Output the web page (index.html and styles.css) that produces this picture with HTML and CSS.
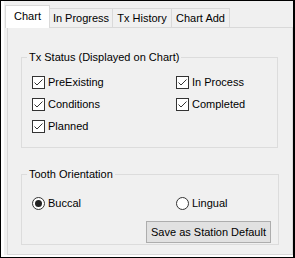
FILE: index.html
```html
<!DOCTYPE html>
<html lang="en">
<head>
  <meta charset="UTF-8">
  <title>Chart Options</title>
  <link rel="stylesheet" href="styles.css">
</head>
<body>
  <div class="frame">
    <div class="inner">
      <div class="tabstrip">
        <div class="tab active tab-chart">Chart</div>
        <div class="tab tab-progress">In Progress</div>
        <div class="tab tab-history">Tx History</div>
        <div class="tab tab-add">Chart Add</div>
      </div>

      <div class="page">
        <fieldset class="group">
          <legend>Tx Status (Displayed on Chart)</legend>
          <div class="options status">
            <label class="opt"><svg class="box" width="13" height="13" viewBox="0 0 13 13"><rect x="0.5" y="0.5" width="12" height="12" fill="#fff" stroke="#333"/><polyline points="2.5,6.5 5,9 10.5,3.5" fill="none" stroke="#333"/></svg>PreExisting</label>
            <label class="opt"><svg class="box" width="13" height="13" viewBox="0 0 13 13"><rect x="0.5" y="0.5" width="12" height="12" fill="#fff" stroke="#333"/><polyline points="2.5,6.5 5,9 10.5,3.5" fill="none" stroke="#333"/></svg>In Process</label>
            <label class="opt"><svg class="box" width="13" height="13" viewBox="0 0 13 13"><rect x="0.5" y="0.5" width="12" height="12" fill="#fff" stroke="#333"/><polyline points="2.5,6.5 5,9 10.5,3.5" fill="none" stroke="#333"/></svg>Conditions</label>
            <label class="opt"><svg class="box" width="13" height="13" viewBox="0 0 13 13"><rect x="0.5" y="0.5" width="12" height="12" fill="#fff" stroke="#333"/><polyline points="2.5,6.5 5,9 10.5,3.5" fill="none" stroke="#333"/></svg>Completed</label>
            <label class="opt"><svg class="box" width="13" height="13" viewBox="0 0 13 13"><rect x="0.5" y="0.5" width="12" height="12" fill="#fff" stroke="#333"/><polyline points="2.5,6.5 5,9 10.5,3.5" fill="none" stroke="#333"/></svg>Planned</label>
          </div>
        </fieldset>

        <fieldset class="group orient">
          <legend>Tooth Orientation</legend>
          <div class="options radios">
            <label class="opt"><svg class="box" width="13" height="13" viewBox="0 0 13 13"><circle cx="6.5" cy="6.5" r="6" fill="#fff" stroke="#333"/><circle cx="6.5" cy="6.5" r="3.5" fill="#222"/></svg>Buccal</label>
            <label class="opt"><svg class="box" width="13" height="13" viewBox="0 0 13 13"><circle cx="6.5" cy="6.5" r="6" fill="#fff" stroke="#333"/></svg>Lingual</label>
            <button class="btn">Save as Station Default</button>
          </div>
        </fieldset>
      </div>
    </div>
  </div>
</body>
</html>
```

FILE: styles.css
```css
body {
  margin: 0;
  background: #fff;
  font-family: 'Liberation Sans', Arial, sans-serif;
  font-size: 11px;
  color: #000;
}
.frame {
  width: 295px;
  height: 258px;
  box-sizing: border-box;
  border: 1px solid #000;
  border-right-width: 2px;
}
.inner {
  height: 100%;
  box-sizing: border-box;
  background: #f0f0f0;
  border-left: 3px solid #fff;
  border-bottom: 2px solid #fff;
  padding-top: 4px;
}
.tabstrip {
  display: flex;
  align-items: flex-end;
  height: 22px;
  padding-left: 1px;
}
.tab {
  box-sizing: border-box;
  height: 19px;
  padding-top: 3px;
  line-height: 13px;
  text-align: center;
  border: 1px solid #d9d9d9;
  border-bottom: 0;
  margin-left: -1px;
  background: #f0f0f0;
}
.tab.active {
  position: relative;
  z-index: 1;
  height: 23px;
  padding-top: 4px;
  margin-left: 0;
  margin-bottom: -1px;
  background: #fff;
}
.tab-chart { width: 45px; }
.tab-progress { width: 64px; }
.tab-history { width: 60px; }
.tab-add { width: 59px; }
.page {
  margin-left: 3px;
  height: 228px;
  box-sizing: border-box;
  border: 1px solid #d9d9d9;
}
.group {
  box-sizing: border-box;
  width: 257px;
  margin: 23px 0 0 13px;
  padding: 0;
  min-width: 0;
  border: 1px solid #dcdcdc;
}
.group legend {
  margin-left: 5px;
  padding: 0 2px;
  line-height: 13px;
}
.group.orient {
  width: 258px;
  margin-top: 20px;
}
.options {
  display: grid;
  grid-template-columns: 144px 1fr;
  grid-auto-rows: 22px;
  padding: 7px 0 10px 10px;
}
.opt {
  display: flex;
  align-items: center;
  gap: 3px;
  line-height: 13px;
}
.box {
  display: block;
  flex: none;
}
.radios {
  padding: 11px 7px 8px 10px;
}
.btn {
  grid-column: 1 / -1;
  justify-self: end;
  margin-top: 7px;
  width: 125px;
  height: 22px;
  padding: 0;
  font-family: 'Liberation Sans', Arial, sans-serif;
  font-size: 11px;
  color: #000;
  background: #e1e1e1;
  border: 1px solid #adadad;
}
```
